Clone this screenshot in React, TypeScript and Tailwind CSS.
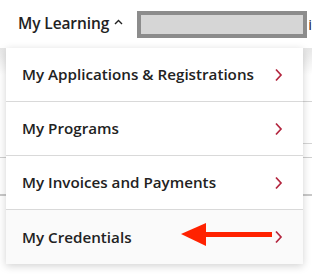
import React from 'react';

const items = [
  'My Applications & Registrations',
  'My Programs',
  'My Invoices and Payments',
  'My Credentials',
];

const Chevron: React.FC = () => (
  <svg width="9" height="14" viewBox="0 0 9 14" className="shrink-0">
    <path d="M2 1.5 L7 7 L2 12.5" fill="none" stroke="#b3263f" strokeWidth="1.7" />
  </svg>
);

const App: React.FC = () => {
  return (
    <div className="relative w-[312px] h-[278px] overflow-hidden bg-white font-['Open_Sans',sans-serif] text-[#222]">
      {/* Top nav */}
      <div className="flex items-center h-[48px] pl-[18px] overflow-hidden whitespace-nowrap">
        <span className="shrink-0 text-[15.5px] font-semibold tracking-[-0.1px]">My Learning</span>
        <svg width="9" height="6" viewBox="0 0 9 6" className="shrink-0 ml-[5px] mb-[4px]">
          <path d="M1 5 L4.5 1.5 L8 5" fill="none" stroke="#222" strokeWidth="1.4" />
        </svg>
        <div className="ml-[14px] w-[170px] h-[27px] shrink-0 border-[4px] border-[#8c8c8c] bg-[#d6d6d6]" />
        <span className="shrink-0 ml-[1px] text-[15px]">i</span>
      </div>

      {/* Page content behind the menu */}
      <div className="h-[27px] bg-gradient-to-b from-[#e6e6e6] to-white" />
      <div className="flex justify-end mt-[26px]">
        <div className="w-[40px] h-[43px] border border-[#d4d4d4] rounded-l-[6px] border-r-0" />
      </div>
      <div className="mt-[13px] h-px bg-[#cfcfcf]" />
      <div className="mt-[36px] h-[2px] bg-[#c8c8c8]" />

      {/* Dropdown menu */}
      <div className="absolute left-[6px] top-[48px] w-[297px] bg-white shadow-[0_2px_8px_rgba(0,0,0,0.18)]">
        {items.map((label, i) => (
          <div
            key={label}
            className={`flex items-center justify-between h-[54px] pl-[16px] pr-[20px] ${
              i < items.length - 1 ? 'border-b border-[#d9d9d9] bg-white' : 'bg-[#fafafa]'
            }`}
          >
            <span className="text-[15.2px] font-semibold">{label}</span>
            <Chevron />
          </div>
        ))}
      </div>

      {/* Annotation arrow */}
      <svg width="96" height="26" viewBox="0 0 96 26" className="absolute left-[180px] top-[222px]">
        <polygon points="1,12 26,1 26,24" fill="#ff2200" />
        <rect x="24" y="10" width="68" height="5" fill="#ff2200" />
      </svg>
    </div>
  );
};

export default App;
